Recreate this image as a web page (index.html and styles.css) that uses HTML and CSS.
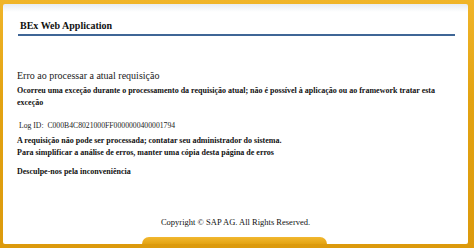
FILE: index.html
```html
<!DOCTYPE html>
<html lang="pt">
<head>
  <meta charset="UTF-8">
  <meta name="viewport" content="width=device-width, initial-scale=1.0">
  <link rel="stylesheet" href="styles.css">
</head>
<body>
<div class="frame">
  <div class="panel">
    <div class="header">
      <div class="app-title">BEx Web Application</div>
    </div>

    <div class="content">
      <div class="error-title">Erro ao processar a atual requisição</div>
      <div class="error-text">Ocorreu uma exceção durante o processamento da requisição atual; não é possível à aplicação ou ao framework tratar esta exceção</div>
      <div class="log-id">Log ID:&nbsp; C000B4C8021000FF0000000400001794</div>
      <div class="error-text">A requisição não pode ser processada; contatar seu administrador do sistema.<br>Para simplificar a análise de erros, manter uma cópia desta página de erros</div>
      <div class="error-text sorry">Desculpe-nos pela inconveniência</div>
    </div>

    <div class="copyright">Copyright © SAP AG. All Rights Reserved.</div>
    <div class="tab"></div>
  </div>
</div>
</body>
</html>
```

FILE: styles.css
```css
html, body {
  margin: 0;
  height: 100%;
}

body {
  background-color: #e3a312;
  font-family: "Liberation Serif", "Times New Roman", serif;
  color: #000;
}

.frame {
  height: 100%;
  box-sizing: border-box;
  padding: 4px 6px 4px 3px;
  background: linear-gradient(#f0b52a, #e3a312 40%, #dc9a0c);
}

.panel {
  height: 100%;
  display: flex;
  flex-direction: column;
  background: linear-gradient(#e6ebf3, #ffffff 8px);
  border-radius: 2px;
}

.header {
  margin: 0 13px 0 15px;
  padding: 16px 0 3px 2px;
  border-bottom: 2px solid #3f6696;
}

.app-title {
  font-size: 10px;
  font-weight: bold;
  color: #111;
}

.content {
  padding: 34px 30px 0 14px;
}

.error-title {
  font-size: 10px;
  color: #222;
  margin-bottom: 4px;
}

.error-text {
  font-size: 8px;
  font-weight: bold;
  line-height: 12px;
  color: #111;
}

.log-id {
  font-size: 7.7px;
  color: #222;
  padding-left: 2px;
  margin: 12px 0 5px;
}

.sorry {
  margin-top: 7px;
}

.copyright {
  margin-top: auto;
  text-align: center;
  font-size: 8.5px;
  color: #111;
  padding-bottom: 10px;
}

.tab {
  align-self: center;
  width: 185px;
  height: 7px;
  margin-left: -2px;
  border-radius: 8px 8px 0 0;
  background: linear-gradient(#f2b830, #e3a312);
}
```
